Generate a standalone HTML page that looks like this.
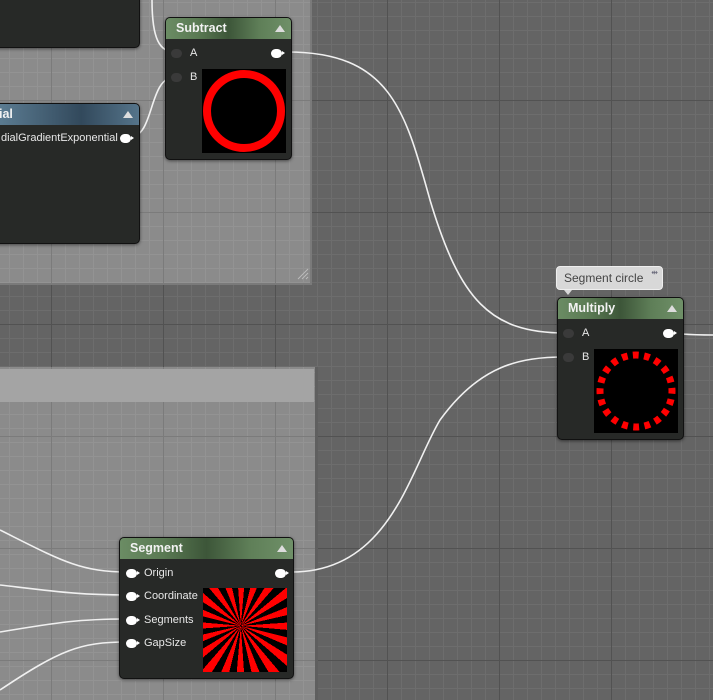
<!DOCTYPE html>
<html><head><style>
*{margin:0;padding:0;box-sizing:border-box}
body{width:713px;height:700px;overflow:hidden;position:relative;font-family:"Liberation Sans",sans-serif;
background-color:#646464;
background-image:linear-gradient(90deg,#525252 1px,transparent 1px),linear-gradient(#525252 1px,transparent 1px),linear-gradient(90deg,#6d6d6d 1px,transparent 1px),linear-gradient(#6d6d6d 1px,transparent 1px);
background-size:112px 112px,112px 112px,14px 14px,14px 14px;
background-position:51px 100px,51px 100px,9px 2px,9px 2px;}
.cm{position:absolute;background-color:#8b8b8b;
background-image:linear-gradient(90deg,#7b7b7b 1px,transparent 1px),linear-gradient(#7b7b7b 1px,transparent 1px),linear-gradient(90deg,#939393 1px,transparent 1px),linear-gradient(#939393 1px,transparent 1px);
background-size:112px 112px,112px 112px,14px 14px,14px 14px;}
.node{position:absolute;background:#272927;border:1px solid #111;border-radius:5px;box-shadow:0 1px 3px rgba(0,0,0,.5);color:#e6e6e6;font-size:11px}
.hd{height:21px;border-radius:4px 4px 0 0;background:linear-gradient(90deg,#6b8c64,#5a7a53 25%,#3d5639 50%,#5f7f58 75%,#6f9068);color:#f2f2f2;font-weight:bold;font-size:12.5px;padding:3px 10px;position:relative}
.hd:after{content:"";position:absolute;right:6px;top:7px;border-left:5px solid transparent;border-right:5px solid transparent;border-bottom:7px solid #ddd}
.pin{position:absolute;width:11px;height:9px;border-radius:5px;background:#3a3a3a}
.pw{position:absolute;width:11px;height:9px;border-radius:5px;background:#fff}
.pw:after{content:"";position:absolute;right:-3px;top:2px;border-left:3px solid #fff;border-top:2.5px solid transparent;border-bottom:2.5px solid transparent}
.lb{position:absolute;font-size:11px;color:#e8e8e8}
</style></head><body>
<div class="cm" style="left:0;top:0;width:312px;height:285px;background-position:51px 100px,51px 100px,9px 2px,9px 2px;border-right:2px solid #7a7a7a;border-bottom:2px solid #7a7a7a"></div>
<div class="cm" style="left:0;top:367px;width:318px;height:333px;background-position:51px -267px,51px -267px,9px 5px,9px 5px;border-right:3px solid #5f5f5f"></div>
<div style="position:absolute;left:0;top:369px;width:314px;height:33px;background:#a4a4a4"></div>
<svg style="position:absolute;left:0;top:0" width="713" height="700">
<g fill="none" stroke="#f0f0f0" stroke-width="1.6">
<path d="M152 0 C152 40 160 52 175 52"/>
<path d="M130 137 C155 137 148 77 175 77"/>
<path d="M287 52 C390 52 405 110 430 200 C460 300 490 333 565 333"/>
<path d="M292 572 C390 572 410 470 440 420 C480 365 520 357 565 357"/>
<path d="M682 334 C695 335 705 335 713 335"/>
<path d="M0 530 C60 560 80 572 127 572"/>
<path d="M0 585 C60 592 80 595 127 595"/>
<path d="M0 632 C60 622 80 619 127 619"/>
<path d="M0 690 C60 650 80 642 127 642"/>
<path d="M298 279 L308 269 M302 279 L308 273 M306 279 L308 277" stroke="#bbb" stroke-width="1"/>
</g></svg>
<div class="node" style="left:-6px;top:-6px;width:146px;height:54px"></div>
<div class="node" style="left:-6px;top:103px;width:146px;height:141px">
<div class="hd" style="background:linear-gradient(90deg,#5d7e94,#32495c 60%,#55748a);padding-left:4px">ial</div>
<div class="lb" style="left:6px;top:28px">dialGradientExponential</div>
<div class="pw" style="left:125px;top:30px"></div></div>
<div class="node" style="left:165px;top:17px;width:127px;height:143px">
<div class="hd">Subtract</div>
<div class="pin" style="left:5px;top:31px"></div><div class="lb" style="left:24px;top:29px">A</div>
<div class="pin" style="left:5px;top:55px"></div><div class="lb" style="left:24px;top:53px">B</div>
<div class="pw" style="left:105px;top:31px"></div>
<svg style="position:absolute;left:36px;top:51px" width="84" height="84"><rect width="84" height="84" fill="#000"/><circle cx="42" cy="42" r="37" fill="none" stroke="#f00" stroke-width="8"/></svg>
</div>
<div style="position:absolute;left:556px;top:266px;width:107px;height:24px;background:#d8d8d8;border-radius:4px;border:1px solid #eee;font-size:12px;color:#444;padding:4px 7px">Segment circle<span style="position:absolute;right:4px;top:1px;font-size:8px;color:#667">⇹</span></div>
<div style="position:absolute;left:564px;top:290px;border-left:4px solid transparent;border-right:4px solid transparent;border-top:5px solid #d8d8d8"></div>
<div class="node" style="left:557px;top:297px;width:127px;height:143px">
<div class="hd">Multiply</div>
<div class="pin" style="left:5px;top:31px"></div><div class="lb" style="left:24px;top:29px">A</div>
<div class="pin" style="left:5px;top:55px"></div><div class="lb" style="left:24px;top:53px">B</div>
<div class="pw" style="left:105px;top:31px"></div>
<svg style="position:absolute;left:36px;top:51px" width="84" height="84"><rect width="84" height="84" fill="#000"/><circle cx="42" cy="42" r="36" fill="none" stroke="#f00" stroke-width="7" stroke-dasharray="5.8 5.5" transform="rotate(-95 42 42)"/></svg>
</div>
<div class="node" style="left:119px;top:537px;width:175px;height:142px">
<div class="hd">Segment</div>
<div class="pw" style="left:6px;top:31px"></div><div class="lb" style="left:24px;top:29px">Origin</div>
<div class="pw" style="left:6px;top:54px"></div><div class="lb" style="left:24px;top:52px">Coordinate</div>
<div class="pw" style="left:6px;top:78px"></div><div class="lb" style="left:24px;top:76px">Segments</div>
<div class="pw" style="left:6px;top:101px"></div><div class="lb" style="left:24px;top:99px">GapSize</div>
<div class="pw" style="left:155px;top:31px"></div>
<div style="position:absolute;left:83px;top:50px;width:84px;height:84px;background:repeating-conic-gradient(from -4deg at 45% 45%,#f00 0 9deg,#000 9deg 18deg)"></div>
</div>
</body></html>
